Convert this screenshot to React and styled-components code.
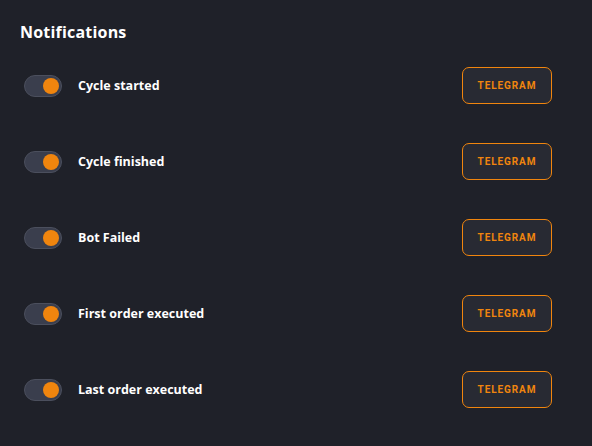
import React, { useState } from "react";
import styled, { createGlobalStyle } from "styled-components";

const GlobalStyle = createGlobalStyle`
    html, body {
        margin: 0;
        padding: 0;
        background: #1f2129;
    }
    * { box-sizing: border-box; }
`;

const Page = styled.div`
    width: 592px;
    min-height: 446px;
    background: #1f2129;
    padding: 22px 40px 0 20px;
    font-family: "Open Sans", "Noto Sans", sans-serif;
    color: #ffffff;
`;

const Title = styled.h2`
    margin: 0 0 25px 0;
    font-size: 16px;
    font-weight: 700;
    line-height: 20px;
    letter-spacing: 0.2px;
`;

const List = styled.div`
    display: flex;
    flex-direction: column;
    gap: 39px;
`;

const Row = styled.div`
    display: flex;
    align-items: center;
    justify-content: space-between;
    height: 37px;
`;

const Left = styled.div`
    display: flex;
    align-items: center;
    gap: 16px;
    padding-left: 4px;
`;

const Track = styled.button`
    width: 38px;
    height: 22px;
    border-radius: 11px;
    background: #3a3e4d;
    border: 1px solid #4b4f5d;
    padding: 0 2px;
    display: flex;
    align-items: center;
    justify-content: ${({ $on }) => ($on ? "flex-end" : "flex-start")};
    cursor: pointer;
`;

const Knob = styled.span`
    width: 16px;
    height: 16px;
    border-radius: 50%;
    background: ${({ $on }) => ($on ? "#f0850e" : "#8a8e9a")};
`;

const Label = styled.span`
    font-size: 12.5px;
    font-weight: 700;
    color: #ffffff;
`;

const ChannelButton = styled.button`
    width: 90px;
    height: 37px;
    border: 1px solid #f0850e;
    border-radius: 7px;
    background: #282a33;
    color: #f0850e;
    font-family: Roboto, "Liberation Sans", sans-serif;
    font-weight: 700;
    font-size: 10px;
    letter-spacing: 0.9px;
    cursor: pointer;
`;

const items = [
    "Cycle started",
    "Cycle finished",
    "Bot Failed",
    "First order executed",
    "Last order executed",
];

export default function App() {
    const [state, setState] = useState(items.map(() => true));
    return (
        <Page>
            <GlobalStyle />
            <Title>Notifications</Title>
            <List>
                {items.map((label, i) => (
                    <Row key={label}>
                        <Left>
                            <Track
                                $on={state[i]}
                                onClick={() => setState(s => s.map((v, j) => (j === i ? !v : v)))}
                            >
                                <Knob $on={state[i]} />
                            </Track>
                            <Label>{label}</Label>
                        </Left>
                        <ChannelButton>TELEGRAM</ChannelButton>
                    </Row>
                ))}
            </List>
        </Page>
    );
}
